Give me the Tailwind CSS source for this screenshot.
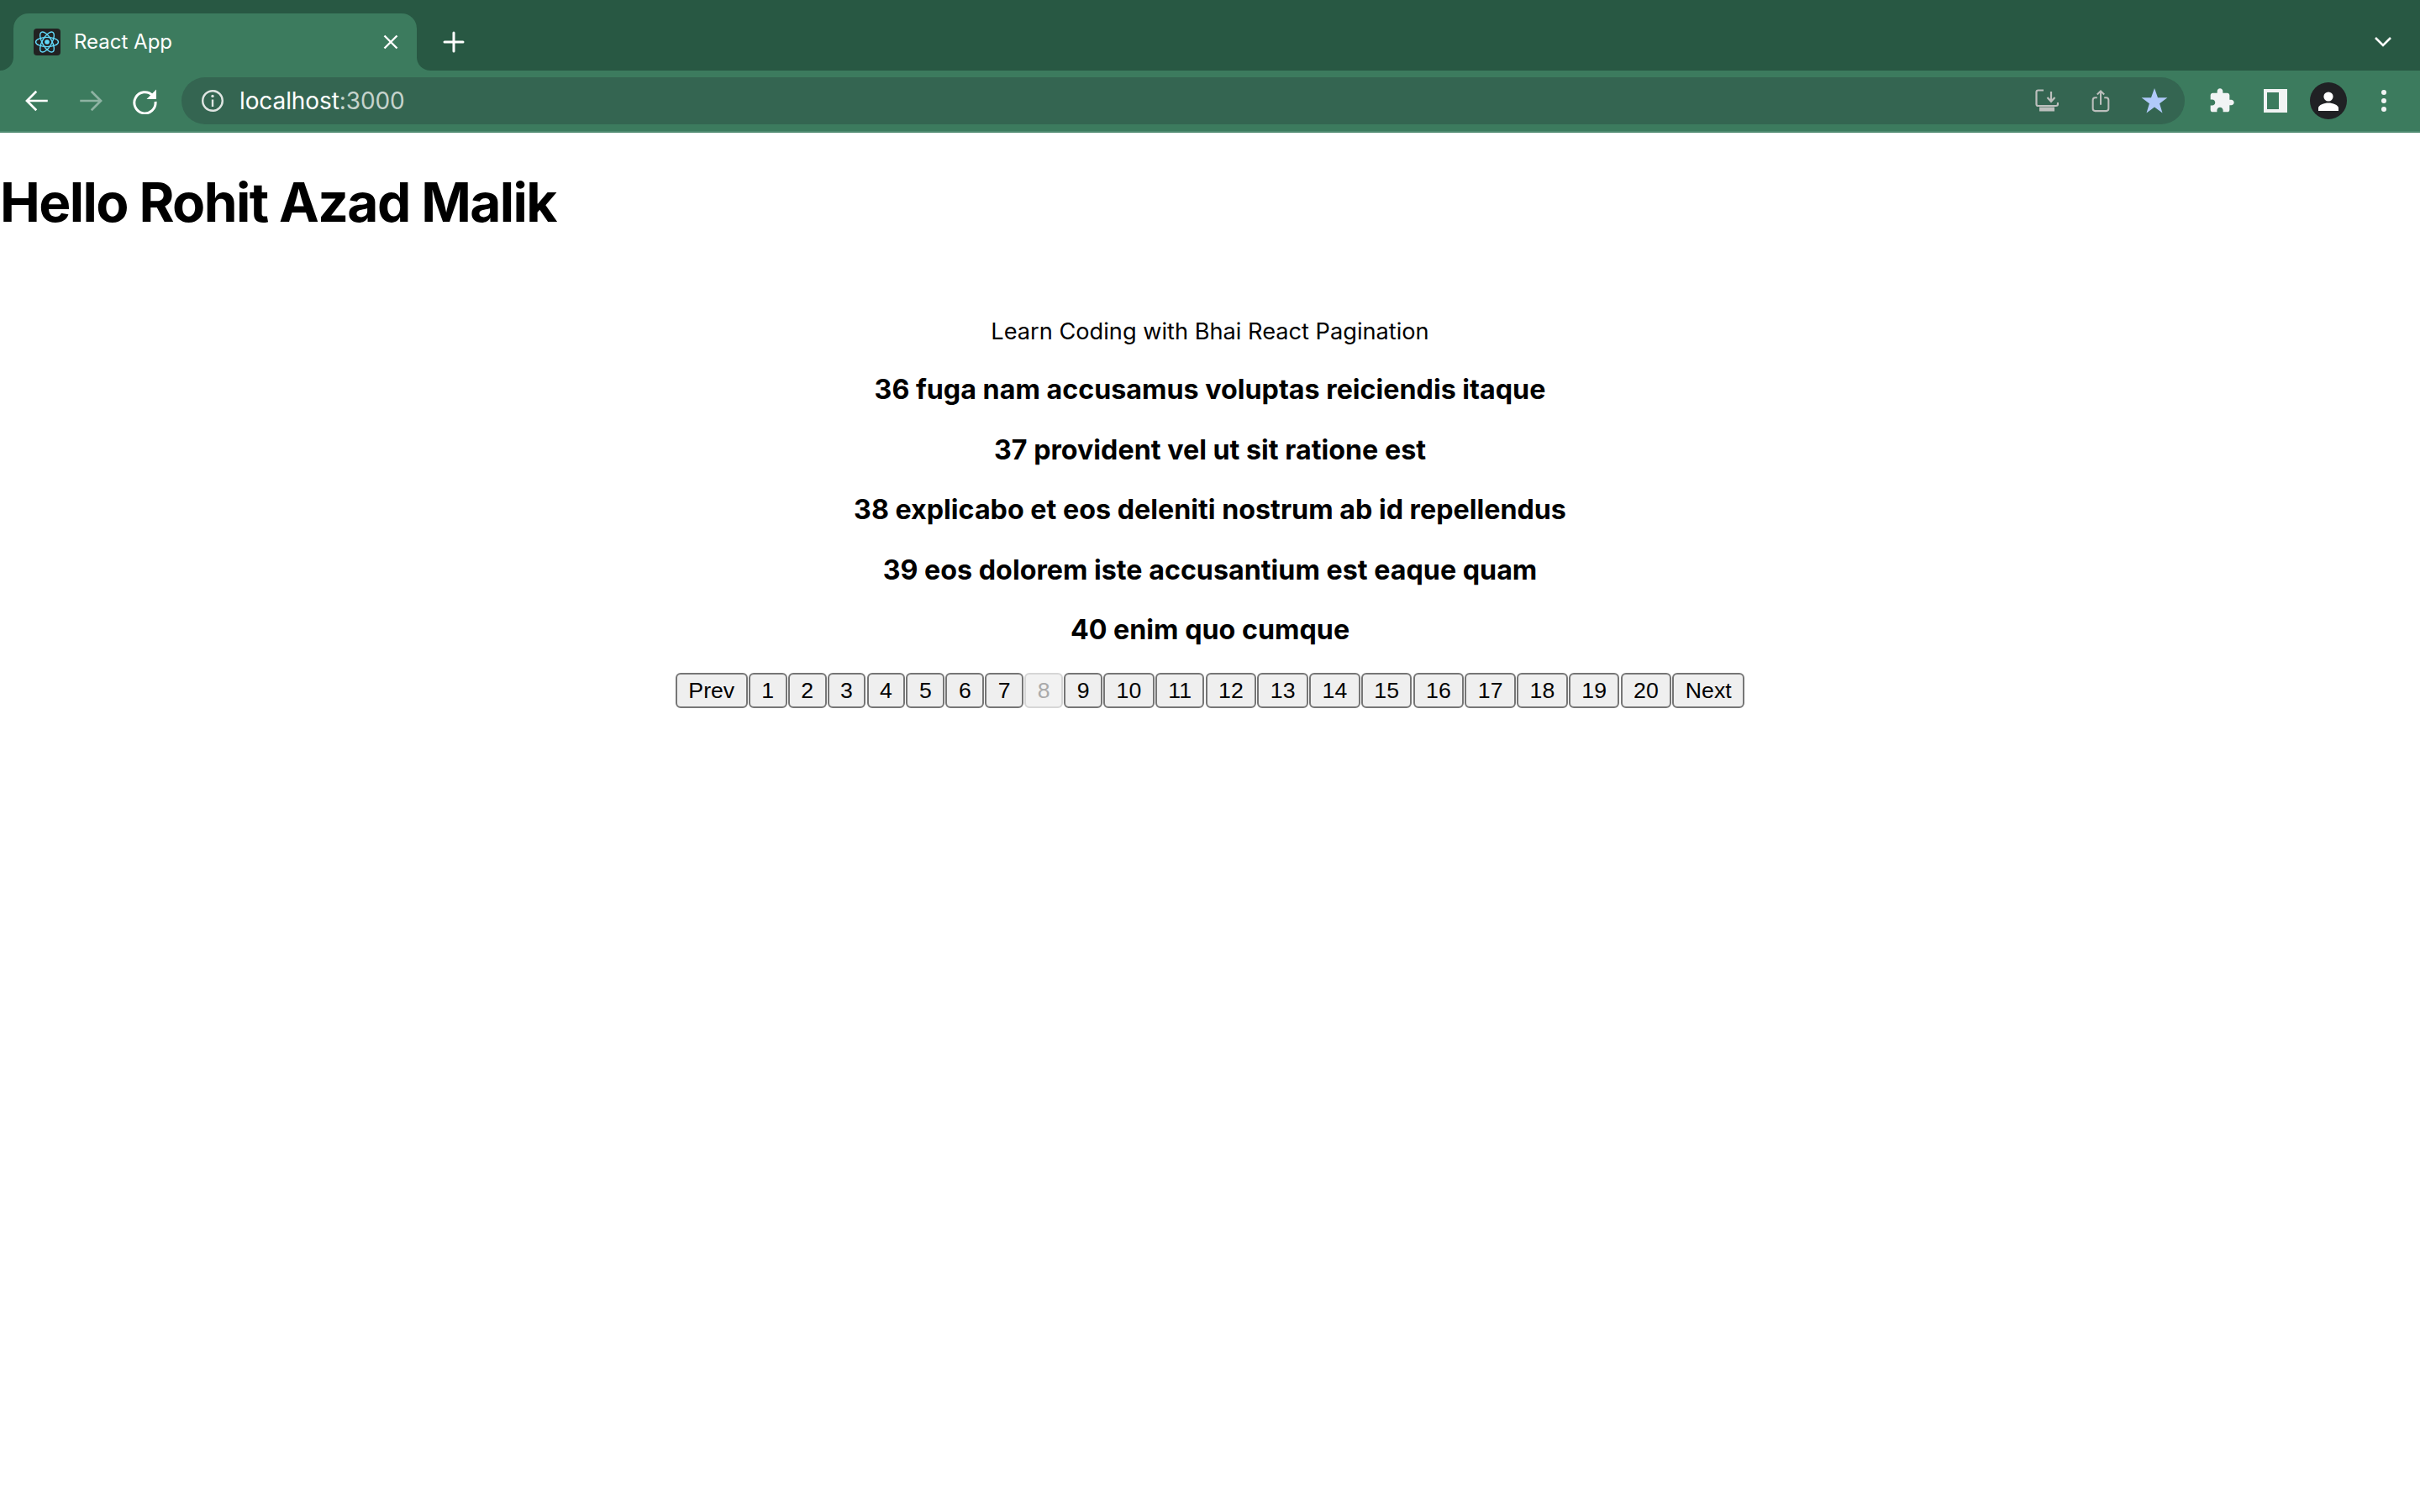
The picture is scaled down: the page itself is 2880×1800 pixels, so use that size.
<!DOCTYPE html>
<html lang="en">
<head>
  <meta charset="UTF-8" />
  <title>React App</title>
  <script src="https://cdn.jsdelivr.net/npm/@tailwindcss/browser@4"></script>
</head>
<body class="bg-white font-['Inter',sans-serif] text-black">
  <div class="w-[2880px] h-[1800px] overflow-hidden flex flex-col">

    <!-- tab strip -->
    <div class="h-[84px] bg-[#285843] pt-4 pl-4 flex items-start relative shrink-0">
      <div class="relative w-[480px] h-[68px] bg-[#3c7b5e] rounded-t-[18px] flex items-center pl-6 pr-5 text-white">
        <div class="absolute -left-4 bottom-0 w-4 h-4 bg-[#3c7b5e]"><div class="w-4 h-4 bg-[#285843] rounded-br-[16px]"></div></div>
        <div class="absolute -right-4 bottom-0 w-4 h-4 bg-[#3c7b5e]"><div class="w-4 h-4 bg-[#285843] rounded-bl-[16px]"></div></div>
        <svg class="w-8 h-8 shrink-0" viewBox="0 0 32 32">
          <rect width="32" height="32" rx="4" fill="#222222"/>
          <g fill="none" stroke="#61dafb" stroke-width="1.4">
            <ellipse cx="16" cy="16" rx="13.5" ry="5.6"/>
            <ellipse cx="16" cy="16" rx="13.5" ry="5.6" transform="rotate(60 16 16)"/>
            <ellipse cx="16" cy="16" rx="13.5" ry="5.6" transform="rotate(120 16 16)"/>
          </g>
          <circle cx="16" cy="16" r="2.8" fill="#61dafb"/>
        </svg>
        <span class="ml-[16px] text-[24px] leading-none">React App</span>
        <svg class="w-[22px] h-[22px] ml-auto" viewBox="0 0 22 22" fill="none" stroke="#ffffff" stroke-width="2.4"><path d="M3.5 3.5l15 15M18.5 3.5l-15 15"/></svg>
      </div>
      <svg class="w-7 h-7 ml-[30px] mt-5" viewBox="0 0 28 28" fill="none" stroke="#ffffff" stroke-width="3" stroke-linecap="round"><path d="M14 3v22M3 14h22"/></svg>
      <svg class="w-7 h-5 absolute left-[2822px] top-[40px]" viewBox="0 0 28 20" fill="none" stroke="#ffffff" stroke-width="2.6"><path d="M5 5l9 9 9-9"/></svg>
    </div>

    <!-- toolbar -->
    <div class="h-[74px] bg-[#3c7b5e] border-b-2 border-[#4e8a70] flex items-start pt-2 pl-[26px] shrink-0">
      <svg class="w-9 h-9 mt-[10px]" viewBox="0 0 24 24" fill="none" stroke="#ffffff" stroke-width="1.8"><path d="M20.5 12H4M11.5 4.5L4 12l7.5 7.5"/></svg>
      <svg class="w-9 h-9 mt-[10px] ml-[28px]" viewBox="0 0 24 24" fill="none" stroke="#8eb3a3" stroke-width="1.8"><path d="M3.5 12H20M12.5 4.5L20 12l-7.5 7.5"/></svg>
      <svg class="w-8 h-8 mt-3 ml-[30px]" viewBox="0 0 32 32" fill="none" stroke="#ffffff" stroke-width="3"><path d="M25.5 9.5A12.6 12.6 0 1 0 29 17"/><path d="M30 2.5V14H18.5z" fill="#ffffff" stroke="none"/></svg>

      <!-- address bar -->
      <div class="w-[2384px] h-14 ml-[28px] bg-[#346551] rounded-[28px] flex items-center pl-[23px] shrink-0">
        <svg class="w-7 h-7 shrink-0" viewBox="0 0 28 28" fill="none" stroke="#dfe5e2" stroke-width="2.4"><circle cx="14" cy="14" r="11.8"/><path d="M14 12.5V21"/><circle cx="14" cy="8.4" r="1.7" fill="#dfe5e2" stroke="none"/></svg>
        <span class="ml-[18px] text-[28px] leading-none text-white tracking-[-0.1px]">localhost<span class="text-[#c5d3cc]">:3000</span></span>
        <svg class="w-7 h-7 ml-auto" viewBox="0 0 28 28" fill="none" stroke="#bcbfbd" stroke-width="2.2"><path d="M10 1.5H3.5a2 2 0 0 0-2 2V18a2 2 0 0 0 2 2h21.5a2 2 0 0 0 2-2v-2"/><path d="M19 3v11M14.5 10l4.5 4.8L23.5 10"/><rect x="5" y="21.5" width="18" height="5" fill="#bcbfbd" stroke="none"/></svg>
        <svg class="w-6 h-7 ml-[38px]" viewBox="0 0 24 30" fill="none" stroke="#bcbfbd" stroke-width="2.2"><path d="M7.5 11H5a3 3 0 0 0-3 3v11a3 3 0 0 0 3 3h14a3 3 0 0 0 3-3V14a3 3 0 0 0-3-3h-2.5"/><path d="M12 20V2.5M7.5 7L12 2.5 16.5 7"/></svg>
        <svg class="w-8 h-8 ml-[36px] mr-[20px]" viewBox="0 0 32 32" fill="#b0c9f9"><path d="M16 1l4 11.2h11.4l-9.3 7 3.4 11.3L16 23.6 6.5 30.5l3.4-11.3-9.3-7H12z"/></svg>
      </div>

      <svg class="w-8 h-8 mt-3 ml-[28px] shrink-0" viewBox="0 0 24 24" fill="#f1f3f4"><path d="M20.5 11H19V7c0-1.1-.9-2-2-2h-4V3.5C13 2.12 11.88 1 10.5 1S8 2.12 8 3.5V5H4c-1.1 0-1.99.9-1.99 2v3.8H3.5c1.49 0 2.7 1.21 2.7 2.7s-1.21 2.7-2.7 2.7H2V20c0 1.1.9 2 2 2h3.8v-1.5c0-1.49 1.21-2.7 2.7-2.7 1.49 0 2.7 1.21 2.7 2.7V22H17c1.1 0 2-.9 2-2v-4h1.5c1.38 0 2.5-1.12 2.5-2.5S21.88 11 20.5 11z"/></svg>
      <div class="w-7 h-7 mt-[14px] ml-[34px] bg-[#f1f3f4] p-1 pr-[10px] shrink-0"><div class="w-full h-full bg-[#3c7b5e]"></div></div>
      <div class="w-11 h-11 mt-[6px] ml-[27px] rounded-full bg-[#202124] flex items-center justify-center shrink-0">
        <svg class="w-6 h-6" viewBox="0 0 24 24" fill="#ffffff"><circle cx="12" cy="7" r="5.6"/><path d="M0 24v-3.4C0 17 7 14.5 12 14.5s12 2.5 12 6.1V24z"/></svg>
      </div>
      <div class="mt-[15px] ml-[41px] flex flex-col gap-1 shrink-0">
        <div class="w-[6px] h-[6px] rounded-full bg-[#f1f3f4]"></div>
        <div class="w-[6px] h-[6px] rounded-full bg-[#f1f3f4]"></div>
        <div class="w-[6px] h-[6px] rounded-full bg-[#f1f3f4]"></div>
      </div>
    </div>

    <!-- page -->
    <h1 class="text-[64px] leading-[78px] font-bold mt-[44px] tracking-[-1.6px]">Hello Rohit Azad Malik</h1>
    <div class="flex flex-col items-center mt-[98px]">
      <p class="text-[27.2px] leading-[34px]">Learn Coding with Bhai React Pagination</p>
      <div class="flex flex-col items-center gap-[37.6px] mt-[35px] text-[32.25px] leading-[34px] font-bold">
        <h3>36 fuga nam accusamus voluptas reiciendis itaque</h3>
        <h3>37 provident vel ut sit ratione est</h3>
        <h3>38 explicabo et eos deleniti nostrum ab id repellendus</h3>
        <h3>39 eos dolorem iste accusantium est eaque quam</h3>
        <h3>40 enim quo cumque</h3>
      </div>
      <div class="flex gap-[1.1px] mt-[34px] font-['Liberation_Sans',sans-serif] text-[26.67px] leading-none">
        <button class="h-[42px] px-[13.5px] border-2 border-[#767676] rounded-[6px] bg-[#efefef]">Prev</button>
        <button class="h-[42px] px-[13.5px] border-2 border-[#767676] rounded-[6px] bg-[#efefef]">1</button>
        <button class="h-[42px] px-[13.5px] border-2 border-[#767676] rounded-[6px] bg-[#efefef]">2</button>
        <button class="h-[42px] px-[13.5px] border-2 border-[#767676] rounded-[6px] bg-[#efefef]">3</button>
        <button class="h-[42px] px-[13.5px] border-2 border-[#767676] rounded-[6px] bg-[#efefef]">4</button>
        <button class="h-[42px] px-[13.5px] border-2 border-[#767676] rounded-[6px] bg-[#efefef]">5</button>
        <button class="h-[42px] px-[13.5px] border-2 border-[#767676] rounded-[6px] bg-[#efefef]">6</button>
        <button class="h-[42px] px-[13.5px] border-2 border-[#767676] rounded-[6px] bg-[#efefef]">7</button>
        <button disabled class="h-[42px] px-[13.5px] border-2 border-[#d6d6d6] rounded-[6px] bg-[#f2f2f2] text-[#aaaaaa]">8</button>
        <button class="h-[42px] px-[13.5px] border-2 border-[#767676] rounded-[6px] bg-[#efefef]">9</button>
        <button class="h-[42px] px-[13.5px] border-2 border-[#767676] rounded-[6px] bg-[#efefef]">10</button>
        <button class="h-[42px] px-[13.5px] border-2 border-[#767676] rounded-[6px] bg-[#efefef]">11</button>
        <button class="h-[42px] px-[13.5px] border-2 border-[#767676] rounded-[6px] bg-[#efefef]">12</button>
        <button class="h-[42px] px-[13.5px] border-2 border-[#767676] rounded-[6px] bg-[#efefef]">13</button>
        <button class="h-[42px] px-[13.5px] border-2 border-[#767676] rounded-[6px] bg-[#efefef]">14</button>
        <button class="h-[42px] px-[13.5px] border-2 border-[#767676] rounded-[6px] bg-[#efefef]">15</button>
        <button class="h-[42px] px-[13.5px] border-2 border-[#767676] rounded-[6px] bg-[#efefef]">16</button>
        <button class="h-[42px] px-[13.5px] border-2 border-[#767676] rounded-[6px] bg-[#efefef]">17</button>
        <button class="h-[42px] px-[13.5px] border-2 border-[#767676] rounded-[6px] bg-[#efefef]">18</button>
        <button class="h-[42px] px-[13.5px] border-2 border-[#767676] rounded-[6px] bg-[#efefef]">19</button>
        <button class="h-[42px] px-[13.5px] border-2 border-[#767676] rounded-[6px] bg-[#efefef]">20</button>
        <button class="h-[42px] px-[13.5px] border-2 border-[#767676] rounded-[6px] bg-[#efefef]">Next</button>
      </div>
    </div>
  </div>
</body>
</html>
